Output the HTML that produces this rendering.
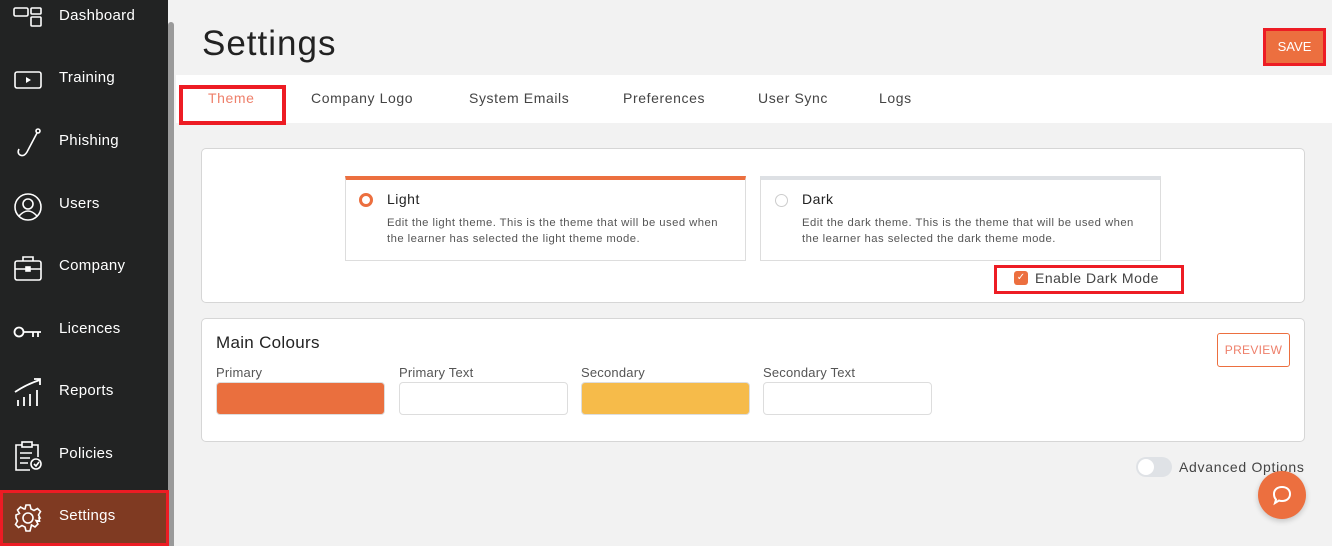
<!DOCTYPE html>
<html><head><meta charset="utf-8"><style>
*{box-sizing:border-box;margin:0;padding:0}
body{width:1332px;height:546px;overflow:hidden;background:#f2f2f2;font-family:"Liberation Sans",sans-serif;position:relative;color:#333}
.a{position:absolute}
#sb{left:0;top:0;width:168px;height:546px;background:#222323}
#scr{left:168px;top:22px;width:6px;height:524px;background:#9a9a9a;border-radius:3px 3px 0 0}
.ni{position:absolute;left:59px;color:#fff;font-size:15px;letter-spacing:0.3px}
.ic{position:absolute;left:12px;width:32px;height:32px}
.tab{position:absolute;top:90px;font-size:14px;color:#444;letter-spacing:0.6px}
.card{background:#fff;border:1px solid #d6d6d6;border-radius:5px}
.lbl{position:absolute;top:365px;font-size:13px;color:#555;letter-spacing:0.2px}
.sw{position:absolute;top:382px;width:169px;height:33px;border:1px solid #ddd;border-radius:4px;background:#fff}
.desc{position:absolute;top:215px;font-size:11.3px;color:#555;line-height:16px;letter-spacing:0.45px}
</style></head><body>
<div id="sb" class="a"></div>
<div id="scr" class="a"></div>
<div class="a" style="left:0;top:490px;width:169px;height:56px;background:#7f3a22;border:3px solid #ed1c24"></div>
<svg class="ic" style="top:0" viewBox="0 0 32 32" fill="none" stroke="#fff" stroke-width="1.6"><rect x="2" y="8" width="14" height="8" rx="1.5"/><rect x="19" y="8" width="10" height="6" rx="1"/><rect x="19" y="17" width="10" height="9" rx="1"/></svg>
<div class="ni" style="top:7px">Dashboard</div>
<svg class="ic" style="top:65px" viewBox="0 0 32 32" fill="none" stroke="#fff" stroke-width="1.6"><rect x="3" y="7" width="26" height="16" rx="2"/><path d="M14 12v6l5-3z" fill="#fff" stroke="none"/></svg>
<div class="ni" style="top:69px">Training</div>
<svg class="ic" style="top:126px" viewBox="0 0 32 32" fill="none" stroke="#fff" stroke-width="1.6"><circle cx="26" cy="5" r="2"/><path d="M25 7 L15 26 Q12 31 8 29 Q5 27 7 23"/></svg>
<div class="ni" style="top:132px">Phishing</div>
<svg class="ic" style="top:191px" viewBox="0 0 32 32" fill="none" stroke="#fff" stroke-width="1.6"><circle cx="16" cy="16" r="13"/><circle cx="16" cy="13" r="5"/><path d="M7 25 Q16 15 25 25"/></svg>
<div class="ni" style="top:195px">Users</div>
<svg class="ic" style="top:252px" viewBox="0 0 32 32" fill="none" stroke="#fff" stroke-width="1.6"><rect x="3" y="9" width="26" height="19" rx="2"/><path d="M11 9V5h10v4M3 17h26"/><rect x="14" y="15" width="4" height="4" fill="#fff"/></svg>
<div class="ni" style="top:257px">Company</div>
<svg class="ic" style="top:316px" viewBox="0 0 32 32" fill="none" stroke="#fff" stroke-width="1.8"><circle cx="7" cy="16" r="4.5"/><path d="M11.5 16H29M21 16v5M26 16v5"/></svg>
<div class="ni" style="top:320px">Licences</div>
<svg class="ic" style="top:375px" viewBox="0 0 32 32" fill="none" stroke="#fff" stroke-width="1.8"><path d="M3 17 Q15 9 28 5M22 4h6v6M6 25v6M12 22v9M18 19v12M25 15v16"/></svg>
<div class="ni" style="top:382px">Reports</div>
<svg class="ic" style="top:439px" viewBox="0 0 32 32" fill="none" stroke="#fff" stroke-width="1.6"><path d="M18 31H4V6h6M20 6h6v12"/><rect x="10" y="3" width="10" height="5"/><path d="M8 14h12M8 19h10M8 24h8"/><circle cx="24" cy="25" r="5"/><path d="M22 25l2 2 3-4"/></svg>
<div class="ni" style="top:445px">Policies</div>
<svg class="ic" style="top:502px" viewBox="0 0 32 32" fill="none" stroke="#fff" stroke-width="1.6"><circle cx="16" cy="16" r="5"/><path d="M14 3h4l1 4 3 1.5 3.5-2 3 3-2 3.5L28 16l-1 0 .5 3-3.5-.5 2 3.5-3 3-3.5-2L19 25l-1 4h-4l-1-4-3-1.5-3.5 2-3-3 2-3.5L4 16l0-3 3.5-1.5-2-3.5 3-3 3.5 2L13 7z"/></svg>
<div class="ni" style="top:507px">Settings</div>

<div class="a" style="left:202px;top:24px;font-size:35px;color:#222;letter-spacing:1px">Settings</div>
<div class="a" style="left:1263px;top:28px;width:63px;height:38px;border:3px solid #ed1c24;background:#ec6f3f;color:#fff;font-size:13px;text-align:center;line-height:32px">SAVE</div>

<div class="a" style="left:176px;top:75px;width:1156px;height:48px;background:#fff"></div>
<div class="a" style="left:179px;top:85px;width:107px;height:40px;border:4px solid #ed1c24"></div>
<div class="tab" style="left:208px;color:#ee7f6a">Theme</div>
<div class="tab" style="left:311px">Company Logo</div>
<div class="tab" style="left:469px">System Emails</div>
<div class="tab" style="left:623px">Preferences</div>
<div class="tab" style="left:758px">User Sync</div>
<div class="tab" style="left:879px">Logs</div>

<div class="a card" style="left:201px;top:148px;width:1104px;height:155px"></div>
<div class="a" style="left:345px;top:176px;width:401px;height:85px;border:1px solid #ddd;border-top:4px solid #ec6f3f;background:#fff"></div>
<div class="a" style="left:359px;top:193px;width:14px;height:14px;border-radius:50%;border:3px solid #ec6f3f;background:#fff"></div>
<div class="a" style="left:387px;top:191px;font-size:14px;color:#222;letter-spacing:0.5px">Light</div>
<div class="desc" style="left:387px">Edit the light theme. This is the theme that will be used when<br>the learner has selected the light theme mode.</div>
<div class="a" style="left:760px;top:176px;width:401px;height:85px;border:1px solid #ddd;border-top:4px solid #dde0e4;background:#fff"></div>
<div class="a" style="left:775px;top:194px;width:13px;height:13px;border-radius:50%;border:1px solid #ccc"></div>
<div class="a" style="left:802px;top:191px;font-size:14px;color:#222;letter-spacing:0.5px">Dark</div>
<div class="desc" style="left:802px">Edit the dark theme. This is the theme that will be used when<br>the learner has selected the dark theme mode.</div>
<div class="a" style="left:994px;top:265px;width:190px;height:29px;border:3px solid #ed1c24;background:#fff"></div>
<div class="a" style="left:1014px;top:271px;width:14px;height:14px;border-radius:3px;background:#ec6f3f;color:#fff;font-size:10px;text-align:center;line-height:14px">✓</div>
<div class="a" style="left:1035px;top:270px;font-size:14px;color:#444;letter-spacing:0.5px">Enable Dark Mode</div>

<div class="a card" style="left:201px;top:318px;width:1104px;height:124px"></div>
<div class="a" style="left:216px;top:333px;font-size:17px;color:#222;letter-spacing:0.3px">Main Colours</div>
<div class="a" style="left:1217px;top:333px;width:73px;height:34px;border:1px solid #ec6f3f;border-radius:3px;color:#ee7f6a;font-size:12px;text-align:center;line-height:32px;letter-spacing:0.3px">PREVIEW</div>
<div class="lbl" style="left:216px">Primary</div>
<div class="lbl" style="left:399px">Primary Text</div>
<div class="lbl" style="left:581px">Secondary</div>
<div class="lbl" style="left:763px">Secondary Text</div>
<div class="sw" style="left:216px;background:#ea6f3e"></div>
<div class="sw" style="left:399px"></div>
<div class="sw" style="left:581px;background:#f6bb4a"></div>
<div class="sw" style="left:763px"></div>

<div class="a" style="left:1136px;top:457px;width:36px;height:20px;border-radius:10px;background:#dfe2e6"></div>
<div class="a" style="left:1138px;top:459px;width:16px;height:16px;border-radius:50%;background:#fff"></div>
<div class="a" style="left:1179px;top:459px;font-size:14px;color:#444;letter-spacing:0.7px">Advanced Options</div>
<div class="a" style="left:1258px;top:471px;width:48px;height:48px;border-radius:50%;background:#ec6f3f;box-shadow:0 2px 6px rgba(0,0,0,.2)"></div>
<svg class="a" style="left:1270px;top:483px" width="24" height="24" viewBox="0 0 24 24" fill="none" stroke="#fff" stroke-width="2"><path d="M12 4c5 0 8 3 8 7s-3 7-8 7c-1 0-2 0-3-.5L5 20l1-3.5C4.5 15 4 13 4 11c0-4 3-7 8-7z"/></svg>
</body></html>
